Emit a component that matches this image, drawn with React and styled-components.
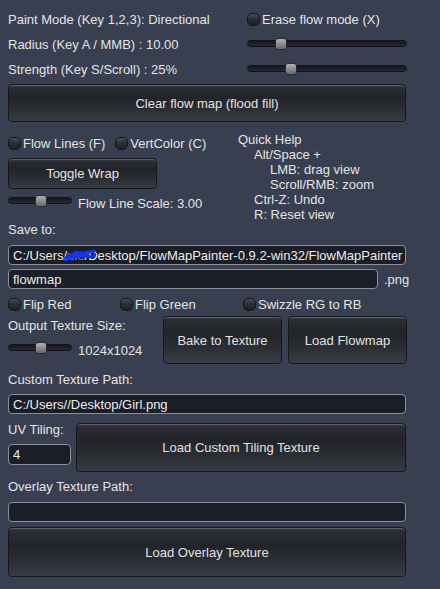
import React from "react";
import styled, { createGlobalStyle } from "styled-components";

const Global = createGlobalStyle`
  html, body {
    margin: 0;
    padding: 0;
    background: #383f50;
  }
  body {
    font-family: "Liberation Sans", Arial, sans-serif;
    font-size: 13px;
    color: #e4e4e4;
  }
`;

export default function App() {
  return (
    <>
      <Global />
      <Styles.Page>
        <Styles.TopGrid>
          <Styles.Label>Paint Mode (Key 1,2,3): Directional</Styles.Label>
          <Styles.Cell>
            <Check label="Erase flow mode (X)" />
          </Styles.Cell>
          <Styles.Label>Radius (Key A / MMB) : 10.00</Styles.Label>
          <Styles.SliderCell>
            <Slider $width={160} $pos={27} />
          </Styles.SliderCell>
          <Styles.Label>Strength (Key S/Scroll) : 25%</Styles.Label>
          <Styles.SliderCell>
            <Slider $width={160} $pos={37} />
          </Styles.SliderCell>
        </Styles.TopGrid>

        <Styles.Button $height={38} $top={2}>
          Clear flow map (flood fill)
        </Styles.Button>

        <Styles.ViewGrid>
          <Styles.Column>
            <Styles.CheckRow>
              <Check label="Flow Lines (F)" />
              <Check label="VertColor (C)" />
            </Styles.CheckRow>
            <Styles.Button $height={31} $top={5} $width={149}>
              Toggle Wrap
            </Styles.Button>
            <Styles.SliderRow $top={4}>
              <Slider $width={64} $pos={26} />
              <Styles.SliderText>Flow Line Scale: 3.00</Styles.SliderText>
            </Styles.SliderRow>
          </Styles.Column>
          <Styles.Help>
            <Styles.HelpLine $indent={0}>Quick Help</Styles.HelpLine>
            <Styles.HelpLine $indent={16}>Alt/Space +</Styles.HelpLine>
            <Styles.HelpLine $indent={32}>LMB: drag view</Styles.HelpLine>
            <Styles.HelpLine $indent={32}>Scroll/RMB: zoom</Styles.HelpLine>
            <Styles.HelpLine $indent={16}>Ctrl-Z: Undo</Styles.HelpLine>
            <Styles.HelpLine $indent={16}>R: Reset view</Styles.HelpLine>
          </Styles.Help>
        </Styles.ViewGrid>

        <Styles.Caption $top={0}>Save to:</Styles.Caption>
        <Styles.Field $top={7}>
          C:/Users/
          <Styles.Redacted>
            ule
            <Styles.Scribble viewBox="0 0 40 14" preserveAspectRatio="none">
              <path
                d="M1 10 C6 6, 10 5, 16 6 S28 4, 38 2 M2 12 C10 8, 20 7, 30 8 S36 7, 39 6 M4 8 C12 4, 22 3, 30 5"
                fill="none"
                stroke="#1133ff"
                strokeWidth="3"
                strokeLinecap="round"
              />
            </Styles.Scribble>
          </Styles.Redacted>
          /Desktop/FlowMapPainter-0.9.2-win32/FlowMapPainter
        </Styles.Field>
        <Styles.FileRow>
          <Styles.Field $grow>flowmap</Styles.Field>
          <Styles.Ext>.png</Styles.Ext>
        </Styles.FileRow>

        <Styles.FlipRow>
          <Check label="Flip Red" />
          <Check label="Flip Green" />
          <Check label="Swizzle RG to RB" />
        </Styles.FlipRow>

        <Styles.BakeGrid>
          <Styles.Column>
            <Styles.Caption $top={2}>Output Texture Size:</Styles.Caption>
            <Styles.SliderRow $top={6}>
              <Slider $width={64} $pos={26} />
              <Styles.SliderText>1024x1024</Styles.SliderText>
            </Styles.SliderRow>
          </Styles.Column>
          <Styles.Button $height={48}>Bake to Texture</Styles.Button>
          <Styles.Button $height={48}>Load Flowmap</Styles.Button>
        </Styles.BakeGrid>

        <Styles.Caption $top={8}>Custom Texture Path:</Styles.Caption>
        <Styles.Field $top={6}>C:/Users//Desktop/Girl.png</Styles.Field>

        <Styles.TilingGrid>
          <Styles.Column>
            <Styles.Caption>UV Tiling:</Styles.Caption>
            <Styles.Field $top={6} $height={21}>
              4
            </Styles.Field>
          </Styles.Column>
          <Styles.Button $height={49} $top={1}>
            Load Custom Tiling Texture
          </Styles.Button>
        </Styles.TilingGrid>

        <Styles.Caption $top={7}>Overlay Texture Path:</Styles.Caption>
        <Styles.Field $top={7} />
        <Styles.Button $height={50} $top={5}>
          Load Overlay Texture
        </Styles.Button>
      </Styles.Page>
    </>
  );
}

function Check({ label }) {
  return (
    <Styles.CheckItem>
      <Styles.CheckBox />
      <span>{label}</span>
    </Styles.CheckItem>
  );
}

function Slider({ $width, $pos }) {
  return (
    <Styles.Track $width={$width}>
      <Styles.Thumb $pos={$pos} />
    </Styles.Track>
  );
}

const Styles = {
  Page: styled.div`
    width: 398px;
    padding: 7px 34px 11px 8px;
    display: flex;
    flex-direction: column;
  `,

  TopGrid: styled.div`
    display: grid;
    grid-template-columns: 239px 159px;
    grid-auto-rows: 25px;
  `,

  Label: styled.div`
    display: flex;
    align-items: center;
    white-space: nowrap;
  `,

  Cell: styled.div`
    display: flex;
    align-items: center;
  `,

  SliderCell: styled.div`
    padding-top: 4px;
  `,

  Button: styled.div`
    box-sizing: border-box;
    height: ${(p) => p.$height}px;
    margin-top: ${(p) => p.$top || 0}px;
    width: ${(p) => (p.$width ? `${p.$width}px` : "auto")};
    display: flex;
    align-items: center;
    justify-content: center;
    border: 1px solid #16181c;
    border-radius: 4px;
    background: linear-gradient(#2c2f35 0%, #222429 35%, #2a2d33 65%, #393c43 100%);
    box-shadow: inset 0 1px 0 #5a5d64, inset 0 2px 0 #34373d;
    color: #e2e2e2;
    white-space: nowrap;
  `,

  ViewGrid: styled.div`
    display: grid;
    grid-template-columns: 230px 1fr;
  `,

  Column: styled.div`
    display: flex;
    flex-direction: column;
  `,

  CheckRow: styled.div`
    display: flex;
    gap: 10px;
    height: 20px;
    margin-top: 11px;
    align-items: center;
  `,

  CheckItem: styled.div`
    display: flex;
    align-items: center;
    gap: 2px;
    white-space: nowrap;
  `,

  CheckBox: styled.div`
    box-sizing: border-box;
    width: 13px;
    height: 13px;
    border-radius: 5px;
    border: 1px solid #14161a;
    background: linear-gradient(#4a4d55 0%, #2c2f35 45%, #1d1f24 100%);
  `,

  SliderRow: styled.div`
    display: flex;
    align-items: flex-start;
    gap: 6px;
    height: 20px;
    margin-top: ${(p) => p.$top}px;
  `,

  SliderText: styled.div`
    line-height: 16px;
    margin-top: 3px;
    white-space: nowrap;
  `,

  Track: styled.div`
    position: relative;
    box-sizing: border-box;
    flex: none;
    width: ${(p) => p.$width}px;
    height: 7px;
    margin-top: 4px;
    border-radius: 4px;
    border: 1px solid #121419;
    background: linear-gradient(#15171c, #262930);
  `,

  Thumb: styled.div`
    position: absolute;
    top: -3px;
    left: ${(p) => p.$pos}px;
    box-sizing: border-box;
    width: 12px;
    height: 12px;
    border-radius: 3px;
    border: 1px solid #2a2b2e;
    background: linear-gradient(#b0b0b0 0%, #8c8c8c 50%, #6a6a6a 100%);
  `,

  Help: styled.div`
    margin-top: 10px;
    display: flex;
    flex-direction: column;
  `,

  HelpLine: styled.div`
    line-height: 15px;
    padding-left: ${(p) => p.$indent}px;
    white-space: nowrap;
  `,

  Caption: styled.div`
    line-height: 16px;
    margin-top: ${(p) => p.$top || 0}px;
    white-space: nowrap;
  `,

  Field: styled.div`
    box-sizing: border-box;
    height: ${(p) => p.$height || 20}px;
    margin-top: ${(p) => p.$top || 0}px;
    flex: ${(p) => (p.$grow ? 1 : "none")};
    display: flex;
    align-items: center;
    padding: 0 4px;
    border: 1px solid #8d9098;
    border-radius: 4px;
    background: #1b1e26;
    color: #ececec;
    white-space: nowrap;
    overflow: hidden;
  `,

  Redacted: styled.span`
    position: relative;
    display: inline-block;
    color: #7d8296;
  `,

  Scribble: styled.svg`
    position: absolute;
    left: -3px;
    top: 1px;
    width: 32px;
    height: 13px;
  `,

  FileRow: styled.div`
    display: flex;
    align-items: center;
    gap: 6px;
    margin-top: 4px;
    width: 399px;
  `,

  Ext: styled.div`
    width: 23px;
  `,

  FlipRow: styled.div`
    display: grid;
    grid-template-columns: 112px 123px 1fr;
    align-items: center;
    height: 20px;
    margin-top: 5px;
  `,

  BakeGrid: styled.div`
    display: grid;
    grid-template-columns: 149px 119px 119px;
    column-gap: 6px;
    margin-top: 2px;
  `,

  TilingGrid: styled.div`
    display: grid;
    grid-template-columns: 63px 1fr;
    column-gap: 5px;
    margin-top: 8px;
  `,
};
